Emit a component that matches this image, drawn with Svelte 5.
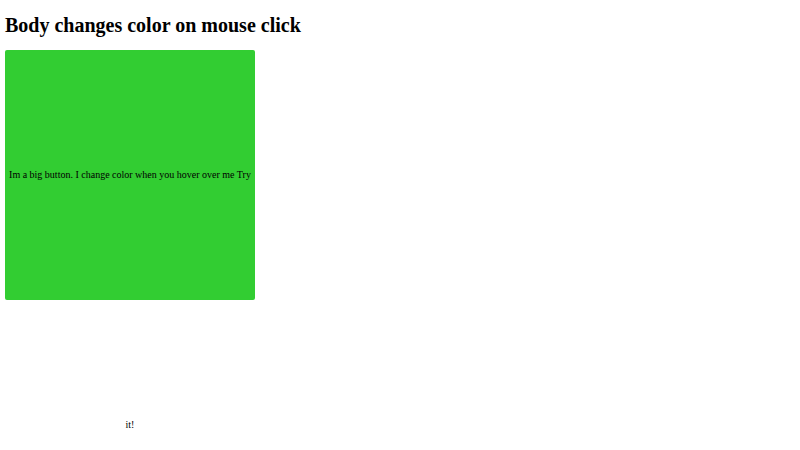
<script>
  const palette = ['white', 'lightblue', 'khaki', 'salmon', 'plum'];
  let index = $state(0);

  function nextColor() {
    index = (index + 1) % palette.length;
  }

  $effect(() => {
    document.body.style.backgroundColor = palette[index];
  });
</script>

<main>
  <h1>Body changes color on mouse click</h1>
  <button type="button" onclick={nextColor}>
    <span class="face">Im a big button. I change color when you hover over me Try it!</span>
  </button>
</main>

<style>
  main {
    padding: 5px;
    font-family: "Liberation Serif", "Times New Roman", serif;
  }

  h1 {
    margin: 0 0 5px;
    font-size: 20px;
    line-height: 40px;
    font-weight: bold;
  }

  button {
    display: block;
    width: 250px;
    padding: 0 0 140px;
    border: 0;
    background: transparent;
    color: black;
    font-family: inherit;
    font-size: 10px;
    line-height: 250px;
    text-align: center;
  }

  /* The line height equals the box, so wrapped text drops below it. */
  .face {
    display: block;
    height: 250px;
    padding: 0 2px;
    border-radius: 2px;
    background: limegreen;
  }

  button:hover .face {
    background: gold;
  }
</style>
